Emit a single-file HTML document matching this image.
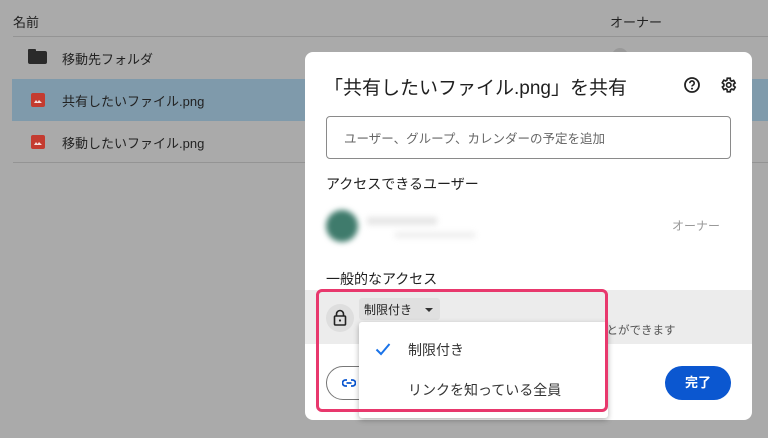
<!DOCTYPE html>
<html><head><meta charset="utf-8"><style>
*{margin:0;padding:0;box-sizing:border-box}
body{width:768px;height:438px;background:#aaaaaa;font-family:"Liberation Sans","Noto Sans CJK JP",sans-serif;position:relative;overflow:hidden;color:#1f1f1f}
.a{position:absolute;white-space:nowrap}
</style></head><body>
<div class="a" style="left:13px;top:12px;font-size:13px;color:#222">名前</div>
<div class="a" style="left:610px;top:12px;font-size:13px;color:#222">オーナー</div>
<div class="a" style="left:13px;top:36px;width:755px;height:1px;background:#949494"></div>
<div class="a" style="left:28px;top:51px;width:19px;height:13px;background:#2a2a2a;border-radius:2px"></div>
<div class="a" style="left:28px;top:49px;width:8px;height:4px;background:#2a2a2a;border-radius:1px"></div>
<div class="a" style="left:62px;top:49px;font-size:13px;color:#222">移動先フォルダ</div>
<div class="a" style="left:612px;top:48px;width:16px;height:16px;border-radius:50%;background:#999"></div>
<div class="a" style="left:12px;top:79px;width:756px;height:42px;background:#7f9aab"></div>
<svg class="a" style="left:31px;top:93px" width="14" height="14" viewBox="0 0 14 14"><rect width="14" height="14" rx="2" fill="#c43b30"/><path d="M3 10l2-3 1.5 2 1.5-2 3 3z" fill="#fff" opacity=".85"/></svg>
<div class="a" style="left:62px;top:91px;font-size:13px;color:#222">共有したいファイル.png</div>
<svg class="a" style="left:31px;top:135px" width="14" height="14" viewBox="0 0 14 14"><rect width="14" height="14" rx="2" fill="#c43b30"/><path d="M3 10l2-3 1.5 2 1.5-2 3 3z" fill="#fff" opacity=".85"/></svg>
<div class="a" style="left:62px;top:133px;font-size:13px;color:#222">移動したいファイル.png</div>
<div class="a" style="left:13px;top:162px;width:755px;height:1px;background:#949494"></div>

<div class="a" style="left:305px;top:52px;width:447px;height:368px;background:#fff;border-radius:8px;overflow:hidden">
  <div class="a" style="left:19px;top:21px;font-size:19px;color:#1f1f1f">「共有したいファイル.png」を共有</div>
  <svg class="a" style="left:378px;top:24px" width="18" height="18" viewBox="0 0 18 18"><circle cx="9" cy="9" r="7" fill="none" stroke="#222" stroke-width="1.8"/><path d="M6.8 7.2a2.2 2.2 0 1 1 3 2c-.6.3-.8.7-.8 1.3" fill="none" stroke="#222" stroke-width="1.6"/><circle cx="9" cy="12.6" r="1" fill="#222"/></svg>
  <svg class="a" style="left:414px;top:24px" width="18" height="18" viewBox="0 0 24 24"><path d="M19.4 13a7.5 7.5 0 0 0 0-2l2.1-1.6-2-3.5-2.5 1a7 7 0 0 0-1.7-1L15 3h-4l-.4 2.6a7 7 0 0 0-1.7 1l-2.5-1-2 3.5L6.6 11a7.5 7.5 0 0 0 0 2l-2.1 1.6 2 3.5 2.5-1a7 7 0 0 0 1.7 1L11 21h4l.4-2.6a7 7 0 0 0 1.7-1l2.5 1 2-3.5z" fill="none" stroke="#222" stroke-width="2.2"/><circle cx="13" cy="12" r="3" fill="none" stroke="#222" stroke-width="2.2"/></svg>
  <div class="a" style="left:21px;top:64px;width:405px;height:43px;border:1px solid #8a8a8a;border-radius:4px"></div>
  <div class="a" style="left:39px;top:76px;font-size:12.5px;color:#666">ユーザー、グループ、カレンダーの予定を追加</div>
  <div class="a" style="left:21px;top:122px;font-size:14px;color:#1f1f1f">アクセスできるユーザー</div>
  <div class="a" style="left:21px;top:158px;width:32px;height:32px;border-radius:50%;background:#3f7b6c;filter:blur(3px)"></div>
  <div class="a" style="left:62px;top:165px;width:70px;height:8px;background:#e6e6e6;filter:blur(3px)"></div>
  <div class="a" style="left:90px;top:180px;width:80px;height:6px;background:#eee;filter:blur(3px)"></div>
  <div class="a" style="left:367px;top:165px;font-size:12px;color:#999">オーナー</div>
  <div class="a" style="left:21px;top:217px;font-size:14px;color:#1f1f1f">一般的なアクセス</div>
  <div class="a" style="left:0;top:238px;width:447px;height:54px;background:#ececec"></div>
  <div class="a" style="left:21px;top:252px;width:28px;height:28px;border-radius:50%;background:#dedede"></div>
  <svg class="a" style="left:28px;top:257px" width="14" height="17" viewBox="0 0 14 17"><path d="M3.5 7V5a3.5 3.5 0 0 1 7 0v2" fill="none" stroke="#222" stroke-width="1.6"/><rect x="1.5" y="7" width="11" height="9" rx="1" fill="none" stroke="#222" stroke-width="1.6"/><circle cx="7" cy="11.5" r="1.1" fill="#222"/></svg>
  <div class="a" style="left:54px;top:246px;width:81px;height:22px;background:#e0e0e0;border-radius:3px"></div>
  <div class="a" style="left:59px;top:249px;font-size:12px;color:#222">制限付き</div>
  <div class="a" style="left:120px;top:256px;width:0;height:0;border-left:4px solid transparent;border-right:4px solid transparent;border-top:4px solid #333"></div>
  <div class="a" style="left:290px;top:270px;font-size:11.5px;color:#555">ことができます</div>
  <div class="a" style="left:21px;top:314px;width:60px;height:34px;border:1px solid #777;border-radius:17px"></div>
  <svg class="a" style="left:37px;top:324px" width="14" height="14" viewBox="0 0 14 14"><path d="M5 4H3.5a3 3 0 0 0 0 6H5M9 4h1.5a3 3 0 0 1 0 6H9M4.5 7h5" fill="none" stroke="#0b57d0" stroke-width="1.8"/></svg>
  <div class="a" style="left:360px;top:314px;width:66px;height:34px;background:#0b57d0;border-radius:17px;color:#fff;font-size:13px;font-weight:bold;text-align:center;line-height:34px">完了</div>
</div>

<div class="a" style="left:359px;top:322px;width:249px;height:96px;background:#fff;box-shadow:0 2px 6px rgba(0,0,0,.3);border-radius:3px"></div>
<svg class="a" style="left:375px;top:342px" width="16" height="14" viewBox="0 0 16 14"><path d="M1.5 7.5l4.5 4.5 8.5-10" fill="none" stroke="#1a73e8" stroke-width="2"/></svg>
<div class="a" style="left:408px;top:340px;font-size:14px;color:#333">制限付き</div>
<div class="a" style="left:408px;top:380px;font-size:14px;color:#333">リンクを知っている全員</div>
<div class="a" style="left:316px;top:289px;width:292px;height:123px;border:3px solid #e8386d;border-radius:6px"></div>
</body></html>
